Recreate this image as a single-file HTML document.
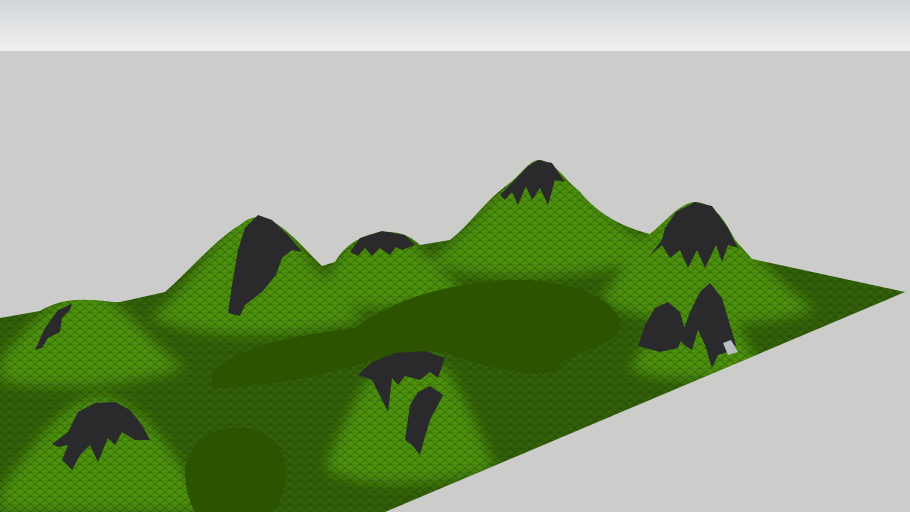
<!DOCTYPE html>
<html><head><meta charset="utf-8"><style>
html,body{margin:0;padding:0;width:910px;height:512px;overflow:hidden;background:#cccccb}
</style></head><body>
<svg width="910" height="512" viewBox="0 0 910 512" xmlns="http://www.w3.org/2000/svg">
<defs>
<linearGradient id="sky" x1="0" y1="0" x2="0" y2="1">
<stop offset="0" stop-color="#d3d7da"/><stop offset="1" stop-color="#f0f0f0"/></linearGradient>
<pattern id="mesh" width="10" height="8" patternUnits="userSpaceOnUse">
<path d="M0 0L10 8M0 8L10 0M0 0H10" stroke="#0c1c00" stroke-width="0.6" opacity="0.45" fill="none"/></pattern>
<clipPath id="tc"><path d="M0,318 L40,311 C55,302 70,299 88,300 C105,300 112,303 120,302 L165,292 C190,270 215,240 240,225 C255,212 268,216 285,230 C300,242 310,255 322,266 L335,262 C345,245 360,236 380,232 C400,231 410,236 420,245 L450,240 C470,225 485,200 510,183 C525,170 530,160 540,160 C555,162 565,180 580,192 C595,210 615,225 650,234 C665,222 680,203 695,202 C712,203 722,215 735,240 L752,259 L905,292 L385,512 L0,512Z"/></clipPath>
<filter id="bl" x="-20%" y="-20%" width="140%" height="140%"><feGaussianBlur stdDeviation="6"/></filter>
</defs>
<rect x="0" y="0" width="910" height="51" fill="url(#sky)"/>
<rect x="0" y="51" width="910" height="461" fill="#cccccb"/>
<g clip-path="url(#tc)">
<rect x="0" y="150" width="910" height="362" fill="#33610a"/>
<g fill="#4e920e" filter="url(#bl)">
<path d="M430,262 C470,228 500,185 535,150 C570,160 600,222 660,250 C610,280 480,285 430,262Z"/>
<path d="M600,300 C630,260 660,200 695,195 C725,205 750,262 815,310 C760,330 650,330 600,300Z"/>
<path d="M150,318 C195,285 230,210 258,205 C290,215 320,290 365,320 C300,340 200,340 150,318Z"/>
<path d="M315,300 C335,262 352,225 380,222 C410,226 430,268 465,290 C420,312 345,312 315,300Z"/>
<path d="M0,360 C25,330 55,290 88,290 C120,295 150,345 185,368 C120,390 30,390 0,380Z"/>
<path d="M325,468 C345,420 370,355 410,348 C445,348 465,400 495,468 C440,488 350,488 325,468Z"/>
<path d="M0,490 C30,450 60,400 100,396 C140,400 170,445 210,512 L0,512Z"/>
<path d="M630,370 C650,330 680,298 708,280 C728,298 745,345 765,370 C720,382 665,382 630,370Z"/>
</g>
<rect x="0" y="150" width="910" height="362" fill="url(#mesh)"/>
<path d="M212,372 C240,345 300,335 355,328 C395,298 450,282 520,280 C585,282 625,305 620,330 C605,352 565,350 555,372 C515,378 470,360 440,352 C380,348 330,385 212,388Z" fill="#2c5300"/>
<path d="M185,470 C190,440 215,425 245,428 C275,432 290,455 285,485 C282,500 275,512 270,512 L195,512 C188,500 185,485 185,470Z" fill="#2c5300"/>
</g>
<g fill="#2a2a2c">
<path d="M500,195 L515,180 L528,166 L538,160 L552,163 L565,182 L555,180 L548,205 L540,188 L532,200 L526,186 L518,205 L512,192 L505,200Z"/>
<path d="M650,255 L662,240 L665,228 L676,212 L695,202 L712,206 L728,228 L738,248 L728,245 L722,262 L716,245 L705,268 L697,250 L688,268 L680,250 L670,258 L662,245Z"/>
<path d="M258,215 L272,220 L288,235 L302,252 L292,250 L282,258 L276,275 L262,292 L245,305 L240,316 L228,313 L232,285 L238,250 L245,228Z"/>
<path d="M350,252 L360,238 L382,231 L405,235 L415,245 L402,250 L396,247 L390,255 L380,248 L372,256 L365,248 L358,256Z"/>
<path d="M35,350 L45,328 L58,310 L72,304 L70,310 L62,318 L60,332 L48,338 L42,348Z"/>
<path d="M358,375 L372,362 L395,353 L425,351 L445,358 L438,378 L430,372 L420,380 L405,376 L398,385 L392,378 L388,412 L378,392 L372,380Z"/>
<path d="M405,440 L410,405 L418,392 L430,386 L443,395 L438,405 L430,420 L424,440 L420,455 L412,445Z"/>
<path d="M52,444 L68,432 L78,412 L95,403 L115,402 L130,410 L142,425 L150,440 L135,440 L122,432 L115,445 L108,438 L98,462 L90,445 L80,455 L72,470 L62,460 L68,445 L58,447Z"/>
<path d="M638,346 L645,325 L655,308 L668,302 L680,312 L685,330 L678,348 L660,352Z"/>
<path d="M680,340 L690,312 L700,292 L710,283 L722,298 L730,325 L736,345 L728,352 L718,355 L712,368 L705,345 L698,330 L692,350 L684,345Z"/>
</g>
<path d="M723,343 L731,340 L738,352 L728,355Z" fill="#b8bcc4"/>
</svg>
</body></html>
